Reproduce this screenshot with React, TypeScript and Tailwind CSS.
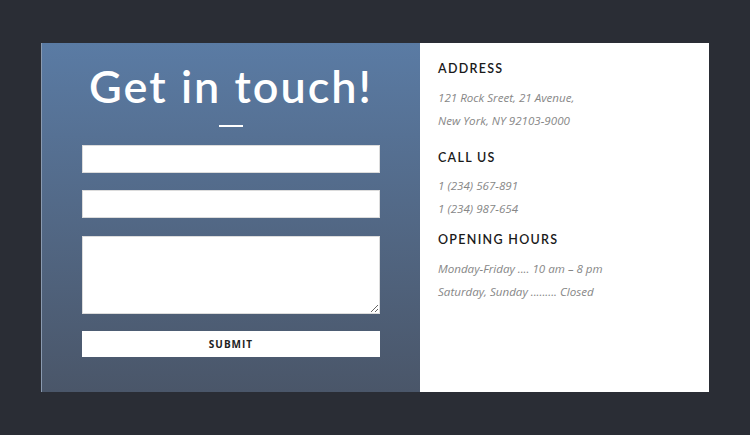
import React from "react";

export default function App() {
  const heading = "text-[12.5px] font-semibold tracking-[1.3px] text-[#1a1a1a] leading-none";
  const body = "italic text-[11.6px] text-[#878787] leading-[23px]";
  return (
    <div className="w-[750px] h-[435px] bg-[#2a2d35] pt-[43px] pl-[41px]" style={{ fontFamily: "'Open Sans', sans-serif" }}>
      <div className="flex w-[668px] h-[349px]">
        <div className="w-[379px] h-full bg-gradient-to-b from-[#5a7ba4] to-[#4a5669] border-l border-[#8a9ab0] flex flex-col items-center">
          <h1 className="mt-[15px] text-white text-[45px] font-semibold tracking-[2px] leading-[56px]" style={{ fontFamily: "Lato, sans-serif" }}>
            Get in touch!
          </h1>
          <div className="mt-[11px] w-[24px] h-[2px] bg-white" />
          <div className="mt-[18px] w-[298px] flex flex-col">
            <input className="h-[28px] bg-white border border-[#dcdcdc] outline-none" />
            <input className="mt-[17px] h-[28px] bg-white border border-[#dcdcdc] outline-none" />
            <textarea className="mt-[18px] h-[78px] bg-white border border-[#dcdcdc] outline-none resize-y" />
            <button className="mt-[17px] h-[26px] bg-white text-[10px] font-bold tracking-[1px] text-[#222]">SUBMIT</button>
          </div>
        </div>
        <div className="flex-1 h-full bg-white pl-[18px] pt-[20px]">
          <div className={heading} style={{ fontFamily: "Lato, sans-serif" }}>ADDRESS</div>
          <div className="mt-[10px]">
            <div className={body}>121 Rock Sreet, 21 Avenue,</div>
            <div className={body}>New York, NY 92103-9000</div>
          </div>
          <div className={`${heading} mt-[20px]`} style={{ fontFamily: "Lato, sans-serif" }}>CALL US</div>
          <div className="mt-[10px]">
            <div className={body}>1 (234) 567-891</div>
            <div className={body}>1 (234) 987-654</div>
          </div>
          <div className={`${heading} mt-[14px]`} style={{ fontFamily: "Lato, sans-serif" }}>OPENING HOURS</div>
          <div className="mt-[10px]">
            <div className={body}>Monday-Friday .... 10 am – 8 pm</div>
            <div className={body}>Saturday, Sunday ......... Closed</div>
          </div>
        </div>
      </div>
    </div>
  );
}
